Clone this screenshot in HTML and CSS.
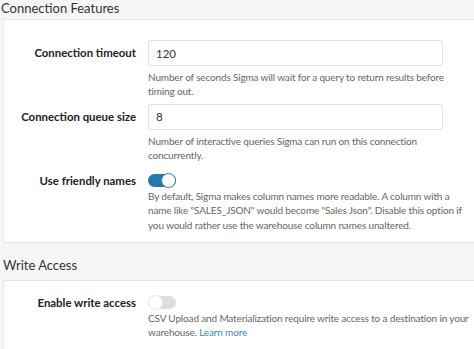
FILE: index.html
```html
<!DOCTYPE html>
<html lang="en">
<head>
  <meta charset="UTF-8" />
  <title>Connection settings</title>
  <link rel="stylesheet" href="styles.css">
</head>
<body>

  <h2 class="section-title">Connection Features</h2>
  <section class="card">
    <div class="row">
      <label class="row-label">Connection timeout</label>
      <div class="row-field">
        <input class="text-input" type="text" value="120">
        <p class="help">Number of seconds Sigma will wait for a query to return results before timing out.</p>
      </div>
    </div>

    <div class="row">
      <label class="row-label">Connection queue size</label>
      <div class="row-field">
        <input class="text-input" type="text" value="8">
        <p class="help">Number of interactive queries Sigma can run on this connection concurrently.</p>
      </div>
    </div>

    <div class="row row-toggle">
      <label class="row-label">Use friendly names</label>
      <div class="row-field">
        <span class="toggle on"><span class="knob"></span></span>
        <p class="help">By default, Sigma makes column names more readable. A column with a name like "SALES_JSON" would become "Sales Json". Disable this option if you would rather use the warehouse column names unaltered.</p>
      </div>
    </div>
  </section>

  <h2 class="section-title band">Write Access</h2>
  <section class="card card-write">
    <div class="row row-toggle">
      <label class="row-label">Enable write access</label>
      <div class="row-field">
        <span class="toggle"><span class="knob"></span></span>
        <p class="help">CSV Upload and Materialization require write access to a destination in your warehouse. <a href="#">Learn more</a></p>
      </div>
    </div>
  </section>

</body>
</html>
```

FILE: styles.css
```css
* {
  box-sizing: border-box;
  margin: 0;
  padding: 0;
}

body {
  background: #f6f6f6;
  color: #333;
  font-family: 'Lato', 'Open Sans', sans-serif;
  overflow: hidden;
}

.section-title {
  font-size: 13px;
  font-weight: normal;
  color: #333;
  line-height: 16px;
  height: 19px;
  padding-left: 1px;
}

.section-title.band {
  height: 37px;
  padding: 14px 0 0 3px;
}

.card {
  background: #fff;
  border: 1px solid #e6e6e6;
  border-right: none;
  margin-left: 3px;
  padding: 20px 0 10px;
}

.card-write {
  padding-top: 15px;
}

.row {
  display: grid;
  grid-template-columns: 132px 1fr;
  column-gap: 12px;
  margin-bottom: 5px;
}

.row:last-child {
  margin-bottom: 0;
}

.row-label {
  text-align: right;
  font-weight: bold;
  font-size: 11.4px;
  line-height: 26px;
  color: #222;
}

.text-input {
  display: block;
  width: 295px;
  height: 26px;
  border: 1px solid #e2e2e2;
  border-radius: 2px;
  padding: 0 7px;
  font-family: inherit;
  font-size: 11.5px;
  color: #333;
  outline: none;
}

.help {
  margin-top: 4px;
  font-size: 10px;
  letter-spacing: -0.15px;
  line-height: 14.3px;
  color: #666;
  width: 320px;
}

.card-write .help {
  width: 326px;
}

.help a {
  color: #3b86c0;
  text-decoration: none;
}

.row-toggle .row-label {
  line-height: 13px;
}

.row-toggle .help {
  margin-top: 2px;
}

.card > .row-toggle:not(:first-child) {
  margin-top: 12px;
}

.toggle {
  display: block;
  position: relative;
  width: 28px;
  height: 13px;
  border-radius: 7px;
  background: #ddd;
}

.toggle.on {
  background: #2a77ae;
}

.knob {
  position: absolute;
  top: -1px;
  left: 0;
  width: 15px;
  height: 15px;
  border-radius: 50%;
  background: #fff;
  border: 1px solid #e6e6e6;
}

.toggle.on .knob {
  left: 13px;
  border-color: #2a77ae;
}
```
